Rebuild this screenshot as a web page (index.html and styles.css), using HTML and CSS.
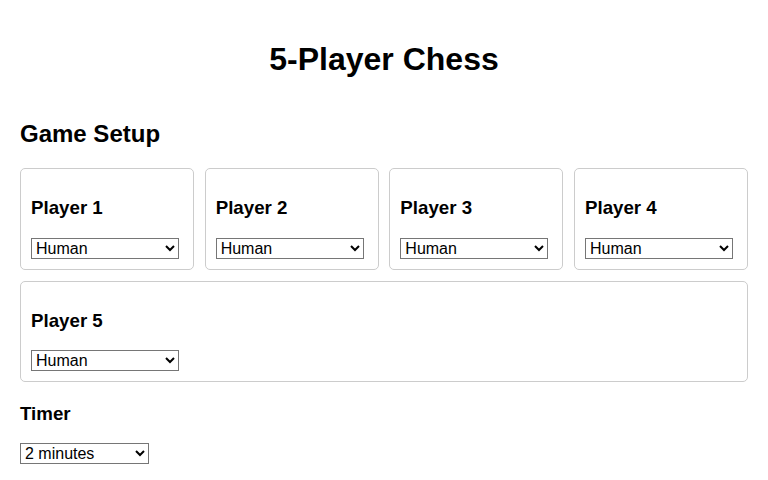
FILE: index.html
```html
<!DOCTYPE html>
<html>
<head>
<meta charset="utf-8">
<link rel="stylesheet" href="styles.css">
</head>
<body>
<div class="page">
  <h1 class="title">5-Player Chess</h1>
  <section class="setup">
    <h2 class="setup-title">Game Setup</h2>
    <div class="players">
      <div class="card">
        <h3 class="card-title">Player 1</h3>
        <select class="sel player-sel"><option>Human</option><option>Computer (Easy)</option></select>
      </div>
      <div class="card">
        <h3 class="card-title">Player 2</h3>
        <select class="sel player-sel"><option>Human</option><option>Computer (Easy)</option></select>
      </div>
      <div class="card">
        <h3 class="card-title">Player 3</h3>
        <select class="sel player-sel"><option>Human</option><option>Computer (Easy)</option></select>
      </div>
      <div class="card">
        <h3 class="card-title">Player 4</h3>
        <select class="sel player-sel"><option>Human</option><option>Computer (Easy)</option></select>
      </div>
      <div class="card card-wide">
        <h3 class="card-title">Player 5</h3>
        <select class="sel player-sel"><option>Human</option><option>Computer (Easy)</option></select>
      </div>
    </div>
    <h3 class="timer-title">Timer</h3>
    <select class="sel timer-sel"><option>2 minutes</option><option>5 minutes</option></select>
  </section>
</div>
</body>
</html>
```
FILE: styles.css
```css
html, body {
  margin: 0;
  padding: 0;
  background: #fff;
}
body {
  font-family: "Liberation Sans", Arial, sans-serif;
  color: #000;
}
.page {
  padding: 0 20px;
}
.title {
  margin: 41px 0 0;
  font-size: 32px;
  line-height: 37px;
  text-align: center;
  font-weight: bold;
}
.setup-title {
  margin: 42px 0 20px;
  font-size: 24px;
  line-height: 28px;
  font-weight: bold;
}
.players {
  display: grid;
  grid-template-columns: repeat(4, 1fr);
  gap: 11px 10.67px;
}
.card {
  border: 1px solid #ccc;
  border-radius: 5px;
  padding: 10px;
}
.card-wide {
  grid-column: 1 / -1;
}
.card-title, .timer-title {
  font-size: 18.72px;
  line-height: 21.5px;
  font-weight: bold;
  margin: 18px 0 19px;
}
.timer-title {
  margin-top: 20.75px;
}
.sel {
  display: block;
  font-family: "Liberation Sans", Arial, sans-serif;
  font-size: 16px;
  height: 21px;
  padding: 0;
  border: 1px solid #767676;
  border-radius: 0;
  background: #fff;
  color: #000;
}
.player-sel {
  width: 148px;
}
.timer-sel {
  width: 129px;
}
```
